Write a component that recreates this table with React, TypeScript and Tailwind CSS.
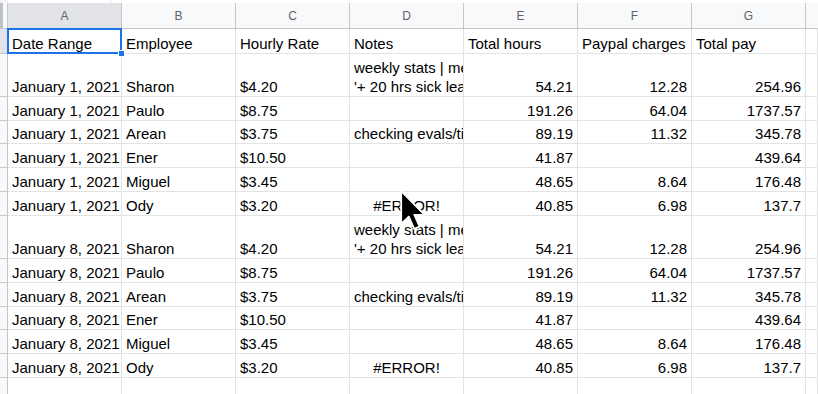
type Row = {
  date: string;
  name: string;
  rate: string;
  notes?: string;
  notesCenter?: boolean;
  hours: string;
  paypal: string;
  total: string;
  h: "tall" | "24" | "23";
};

const week = (date: string, shortRow: number): Row[] =>
  [
    {
      date,
      name: "Sharon",
      rate: "$4.20",
      notes: "weekly stats | meetings\n'+ 20 hrs sick leave",
      hours: "54.21",
      paypal: "12.28",
      total: "254.96",
      h: "tall" as const,
    },
    { date, name: "Paulo", rate: "$8.75", hours: "191.26", paypal: "64.04", total: "1737.57", h: "24" as const },
    {
      date,
      name: "Arean",
      rate: "$3.75",
      notes: "checking evals/tickets",
      hours: "89.19",
      paypal: "11.32",
      total: "345.78",
      h: "24" as const,
    },
    { date, name: "Ener", rate: "$10.50", hours: "41.87", paypal: "", total: "439.64", h: "24" as const },
    { date, name: "Miguel", rate: "$3.45", hours: "48.65", paypal: "8.64", total: "176.48", h: "24" as const },
    {
      date,
      name: "Ody",
      rate: "$3.20",
      notes: "#ERROR!",
      notesCenter: true,
      hours: "40.85",
      paypal: "6.98",
      total: "137.7",
      h: "24" as const,
    },
  ].map((r, i) => (i === shortRow ? { ...r, h: "23" as const } : r));

const rows: Row[] = [...week("January 1, 2021", 2), ...week("January 8, 2021", 3)];

const cols = ["A", "B", "C", "D", "E", "F", "G"];

const heights = {
  tall: "[&>div]:h-[43px]",
  "24": "[&>div]:h-[24px]",
  "23": "[&>div]:h-[23px]",
};

function Cell({
  children,
  align = "left",
}: {
  children?: React.ReactNode;
  align?: "left" | "right" | "center";
}) {
  const justify =
    align === "right" ? "justify-end text-right" : align === "center" ? "justify-center text-center" : "justify-start";
  return (
    <div
      className={`flex items-end overflow-hidden whitespace-pre border-r border-b border-[#e2e3e3] px-[4px] leading-[19px] ${justify}`}
    >
      {children}
    </div>
  );
}

function RowHead({ active }: { active?: boolean }) {
  return (
    <div
      className={`border-r border-b border-[#c4c7c5] ${active ? "bg-[#e1e3e6]" : "bg-[#f8f9fa]"}`}
    />
  );
}

function Cursor() {
  return (
    <svg
      className="absolute left-[400px] top-[190px]"
      width="26"
      height="40"
      viewBox="0 0 13 20"
    >
      <path
        d="M0.6 0.6 L0.6 17 L4.4 13.3 L7.1 19.4 L9.8 18.3 L7.2 12.4 L12.3 12.4 Z"
        fill="#000"
        stroke="#fff"
        strokeWidth="0.9"
        strokeLinejoin="round"
      />
    </svg>
  );
}

export default function App() {
  return (
    <div
      className="relative w-[818px] h-[394px] overflow-hidden bg-white text-[15px] text-black"
      style={{ fontFamily: '"Liberation Sans", Arial, sans-serif' }}
    >
      {/* strip left over from the toolbar above */}
      <div className="flex h-[3px]">
        <div className="w-[8px] bg-[#f1f3f4]" />
        <div className="w-[102px]" />
        <div className="w-[1px] bg-[#e2e3e3]" />
      </div>

      <div className="grid grid-cols-[8px_repeat(7,114px)_1fr]">
        {/* column headers */}
        <div className="flex h-[26px] border-r border-b border-[#c4c7c5] bg-[#f8f9fa]">
          <div className="w-[3px] bg-[#bdc1c6]" />
        </div>
        {cols.map((c, i) => (
          <div
            key={c}
            className={`flex h-[26px] items-center justify-center border-r border-b border-[#c4c7c5] text-[12px] text-[#5f6368] ${
              i === 0 ? "bg-[#e1e3e6]" : "bg-[#f8f9fa]"
            }`}
          >
            {c}
          </div>
        ))}
        <div className="h-[26px] border-b border-[#c4c7c5] bg-[#f8f9fa]" />

        {/* header row */}
        <div className="contents [&>div]:h-[25px]">
          <RowHead active />
          <div className="relative flex items-end border-r border-b border-[#e2e3e3] px-[4px] leading-[19px]">
            Date Range
            <div className="absolute -left-[1px] -top-[1px] h-[26px] w-[115px] border-2 border-[#1a73e8]" />
            <div className="absolute -right-[4px] -bottom-[4px] h-[7px] w-[7px] border border-white bg-[#1a73e8]" />
          </div>
          <Cell>Employee</Cell>
          <Cell>Hourly Rate</Cell>
          <Cell>Notes</Cell>
          <Cell>Total hours</Cell>
          <Cell>Paypal charges</Cell>
          <Cell>Total pay</Cell>
          <Cell />
        </div>

        {rows.map((r, i) => (
          <div key={i} className={`contents ${heights[r.h]}`}>
            <RowHead />
            <Cell>{r.date}</Cell>
            <Cell>{r.name}</Cell>
            <Cell>{r.rate}</Cell>
            <Cell align={r.notesCenter ? "center" : "left"}>{r.notes}</Cell>
            <Cell align="right">{r.hours}</Cell>
            <Cell align="right">{r.paypal}</Cell>
            <Cell align="right">{r.total}</Cell>
            <Cell />
          </div>
        ))}

        {/* empty trailing row */}
        <div className="contents [&>div]:h-[24px]">
          <RowHead />
          {cols.map((c) => (
            <Cell key={c} />
          ))}
          <Cell />
        </div>
      </div>

      <Cursor />
    </div>
  );
}
